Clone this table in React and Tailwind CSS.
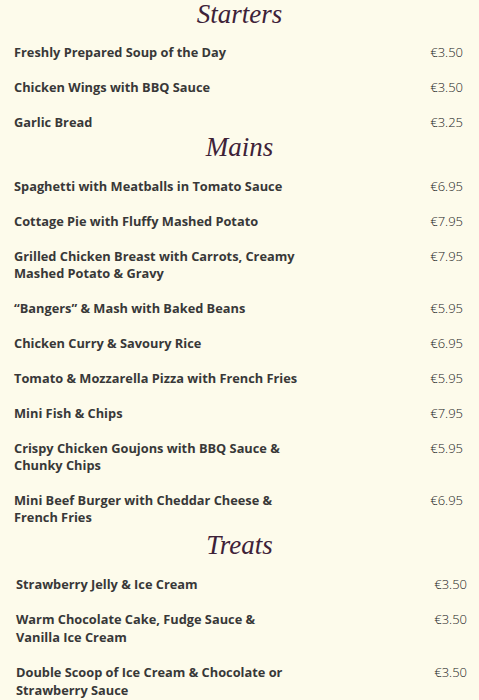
const starters = [
  { name: ["Freshly Prepared Soup of the Day"], price: "€3.50" },
  { name: ["Chicken Wings with BBQ Sauce"], price: "€3.50" },
  { name: ["Garlic Bread"], price: "€3.25" },
];

const mains = [
  { name: ["Spaghetti with Meatballs in Tomato Sauce"], price: "€6.95" },
  { name: ["Cottage Pie with Fluffy Mashed Potato"], price: "€7.95" },
  { name: ["Grilled Chicken Breast with Carrots, Creamy", "Mashed Potato & Gravy"], price: "€7.95" },
  { name: ["“Bangers” & Mash with Baked Beans"], price: "€5.95" },
  { name: ["Chicken Curry & Savoury Rice"], price: "€6.95" },
  { name: ["Tomato & Mozzarella Pizza with French Fries"], price: "€5.95" },
  { name: ["Mini Fish & Chips"], price: "€7.95" },
  { name: ["Crispy Chicken Goujons with BBQ Sauce &", "Chunky Chips"], price: "€5.95" },
  { name: ["Mini Beef Burger with Cheddar Cheese &", "French Fries"], price: "€6.95" },
];

const treats = [
  { name: ["Strawberry Jelly & Ice Cream"], price: "€3.50" },
  { name: ["Warm Chocolate Cake, Fudge Sauce &", "Vanilla Ice Cream"], price: "€3.50" },
  { name: ["Double Scoop of Ice Cream & Chocolate or", "Strawberry Sauce"], price: "€3.50" },
];

function Heading({ children, className = "" }) {
  return (
    <h2
      className={`text-center italic text-[27px] leading-[26px] text-[#3e2238] ${className}`}
      style={{ fontFamily: '"Liberation Serif", "DejaVu Serif", serif' }}
    >
      {children}
    </h2>
  );
}

function Row({ item, treat }) {
  return (
    <div
      className={`flex justify-between ${
        treat ? "pt-[17px] leading-[18px] pl-[16px] pr-[12px]" : "pt-[18px] leading-[17px] pl-[14px] pr-[16px]"
      }`}
    >
      <div
        className="text-[12.8px] font-bold text-[#383838]"
        style={{ fontFamily: '"Open Sans", "Noto Sans", sans-serif' }}
      >
        {item.name.map((line, i) => (
          <div key={i}>{line}</div>
        ))}
      </div>
      <div
        className="text-[13px] font-light text-[#222]"
        style={{ fontFamily: '"Open Sans", "Noto Sans", sans-serif' }}
      >
        {item.price}
      </div>
    </div>
  );
}

export default function App() {
  return (
    <div className="min-h-screen bg-[#fdfbeb] w-[479px] overflow-hidden pt-[1px]">
      <Heading className="h-[25px]">Starters</Heading>
      {starters.map((it) => (
        <Row key={it.price + it.name[0]} item={it} />
      ))}

      <Heading className="mt-[3px] h-[26px]">Mains</Heading>
      {mains.map((it) => (
        <Row key={it.name[0]} item={it} />
      ))}

      <Heading className="mt-[6px] h-[26px]">Treats</Heading>
      {treats.map((it) => (
        <Row key={it.name[0]} item={it} treat />
      ))}
      <div className="h-[40px]" />
    </div>
  );
}
